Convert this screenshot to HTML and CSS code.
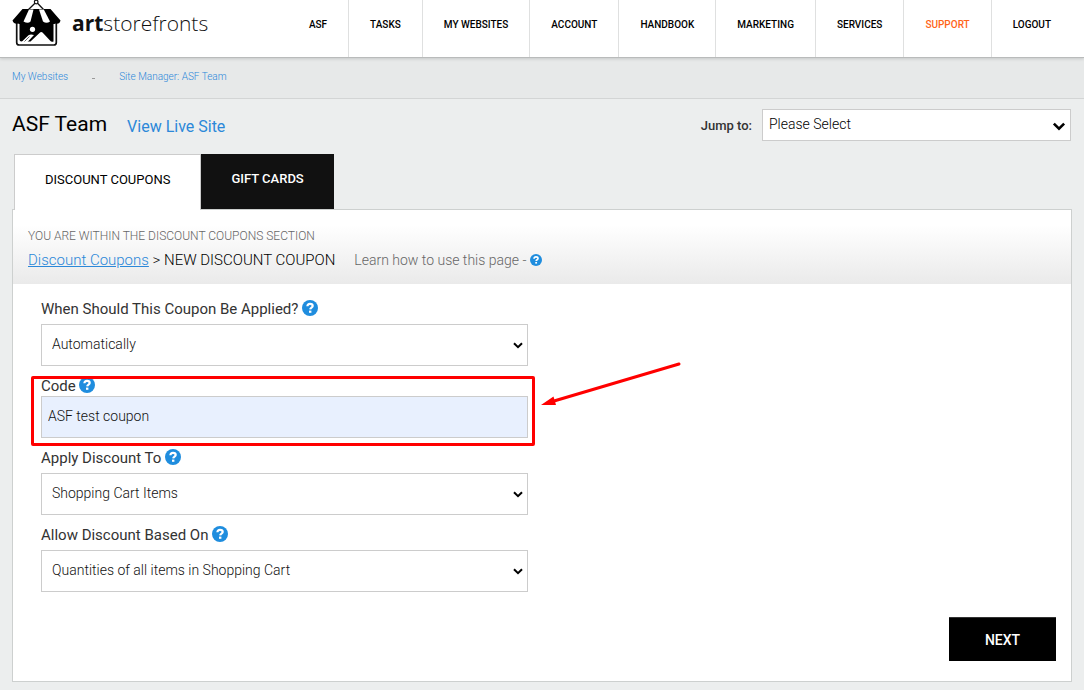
FILE: index.html
```html
<!DOCTYPE html>
<html lang="en">
<head>
<meta charset="utf-8">
<meta name="viewport" content="width=device-width, initial-scale=1">
<title>New Discount Coupon</title>
<link rel="stylesheet" href="styles.css">
</head>
<body>
<svg class="sprite" aria-hidden="true">
  <symbol id="help" viewBox="0 0 16 16">
    <circle cx="8" cy="8" r="8" fill="#1f8dde"/>
    <path d="M5.400 6.300C5.500 4.600 6.500 3.800 8 3.800s2.700.8 2.700 2.200c0 1.700-2.300 1.500-2.500 3.300" fill="none" stroke="#fff" stroke-width="2.200"/>
    <rect x="7" y="10.600" width="2.400" height="2.200" fill="#fff"/>
  </symbol>
  <symbol id="chevron" viewBox="0 0 10 7">
    <path d="M1 1.2l4 4 4-4" fill="none" stroke="currentColor" stroke-width="2"/>
  </symbol>
</svg>
<header class="topbar">
  <a class="logo" href="#">
    <svg class="logo-mark" viewBox="0 0 50 48" aria-hidden="true">
      <path d="M17 10L24.200 3M33 10L26.300 3" stroke="#111" stroke-width="1.300" fill="none"/>
      <circle cx="25.200" cy="2" r="1.800" fill="none" stroke="#111" stroke-width="1.200"/>
      <path d="M5.700 22V42.500Q5.700 45 8.200 45H42.800Q45.300 45 45.300 42.500V22" fill="#fff" stroke="#111" stroke-width="1.700"/>
      <path d="M8.500 20H42.500V41.500Q40.500 42.500 39 40.500L31.500 32.500Q30 31.500 28.500 33L19.500 41.500H10.500Q8.500 41.500 8.500 39.500Z" fill="#000"/>
      <circle cx="21.500" cy="29.300" r="2.600" fill="#fff"/>
      <path d="M10.500 42L17.500 35.300Q19.500 33.800 23 35L16.500 42Z" fill="#fff"/>
      <path d="M13.500 41.500L18.500 36.500" stroke="#000" stroke-width=".6"/>
      <path d="M11.500 9H39.500L49.500 20.500Q48.500 24.500 44.500 23.500Q42.500 24.500 39 23.500Q36 25 33 23Q29.500 25 26 23Q21.500 25 18.500 23Q15.500 25 12.500 23.500Q9 24.500 7 23.500Q3 24.500 1.500 20.500Z" fill="#000"/>
      <path d="M18 9.500H22.500L19.500 21.500Q17 24 12.500 21.500Z" fill="#fff"/>
      <path d="M28 9.500H32.800L39 21.500Q35.500 24 32 21.500Z" fill="#fff"/>
    </svg>
    <span class="logo-text"><b>art</b>storefronts</span>
  </a>
  <nav class="nav">
    <a href="#">ASF</a><a href="#">TASKS</a><a href="#">MY WEBSITES</a><a href="#">ACCOUNT</a><a href="#">HANDBOOK</a><a href="#">MARKETING</a><a href="#">SERVICES</a><a class="nav-support" href="#">SUPPORT</a><a href="#">LOGOUT</a>
  </nav>
</header>
<div class="crumbs">
  <a href="#">My Websites</a><span class="crumb-dot"></span><a href="#">Site Manager: ASF Team</a>
</div>
<main class="page">
  <div class="title-row">
    <h1>ASF Team</h1>
    <a class="live" href="#">View Live Site</a>
    <label class="jump-label" for="jump">Jump to:</label>
    <div class="select jump">
      <select id="jump"><option>Please Select</option></select>
      <svg><use href="#chevron"/></svg>
    </div>
  </div>
  <div class="tabs">
    <button class="tab tab-active" type="button">DISCOUNT COUPONS</button>
    <button class="tab" type="button">GIFT CARDS</button>
  </div>
  <section class="panel">
    <div class="panel-head">
      <p class="section-note">YOU ARE WITHIN THE DISCOUNT COUPONS SECTION</p>
      <p class="trail"><span class="where"><a href="#">Discount Coupons</a> &gt; NEW DISCOUNT COUPON</span><a class="learn" href="#">Learn how to use this page - <svg class="help-small"><use href="#help"/></svg></a></p>
    </div>
    <form class="form">
      <div class="field">
        <label for="when">When Should This Coupon Be Applied? <svg class="help"><use href="#help"/></svg></label>
        <div class="select"><select id="when"><option>Automatically</option></select><svg><use href="#chevron"/></svg></div>
      </div>
      <div class="field field-code">
        <label for="code">Code <svg class="help"><use href="#help"/></svg></label>
        <input id="code" type="text" value="ASF test coupon">
        <div class="highlight"></div>
        <svg class="arrow" viewBox="0 0 140 46" aria-hidden="true"><path d="M13 39L138 2" stroke="#f00" stroke-width="3" stroke-linecap="round"/><path d="M0 43L12.500 34.500L15 43Z" fill="#f00"/></svg>
      </div>
      <div class="field">
        <label for="apply">Apply Discount To <svg class="help"><use href="#help"/></svg></label>
        <div class="select"><select id="apply"><option>Shopping Cart Items</option></select><svg><use href="#chevron"/></svg></div>
      </div>
      <div class="field">
        <label for="based">Allow Discount Based On <svg class="help"><use href="#help"/></svg></label>
        <div class="select"><select id="based"><option>Quantities of all items in Shopping Cart</option></select><svg><use href="#chevron"/></svg></div>
      </div>
      <button class="next" type="submit">NEXT</button>
    </form>
  </section>
</main>
</body>
</html>
```
FILE: styles.css
```css
* { box-sizing: border-box; }
body {
  margin: 0;
  background: #eceeee;
  color: #000;
  font-family: Roboto, "Liberation Sans", sans-serif;
}
a { color: #2b88d9; text-decoration: none; }
h1, p { margin: 0; font-weight: 400; }
button, input, select { font-family: inherit; border-radius: 0; }
.sprite { display: none; }

.topbar {
  position: relative;
  display: flex;
  justify-content: space-between;
  height: 58px;
  padding: 0 12px 0 11px;
  background: #fff;
  border-bottom: 1px solid #b9bbbb;
  box-shadow: 0 1px 3px rgba(0, 0, 0, .15);
}
.logo { display: flex; align-items: flex-start; color: #111; }
.logo-mark { width: 50px; height: 48px; }
.logo-text {
  padding-left: 11px;
  font: 300 21px/46px "Open Sans", sans-serif;
}
.logo-text b { font-weight: 700; }
.nav { display: flex; }
.nav a {
  padding: 0 21px;
  border-right: 1px solid #dfe0e0;
  color: #000;
  font-size: 10px;
  font-weight: 500;
  line-height: 50px;
}
.nav a:last-child { border-right: 0; }
.nav .nav-support { color: #ff6418; }

.crumbs {
  display: flex;
  align-items: center;
  height: 41px;
  padding: 0 12px 3px;
  background: #e7e9e9;
  border-bottom: 1px solid #d3d5d5;
  font-size: 10px;
  font-weight: 300;
}
.crumb-dot { width: 3px; height: 1px; margin: 4px 24px 0; background: #999; }

.page { padding: 10px 12px 8px; }
.title-row { display: flex; align-items: center; height: 32px; }
h1 { margin-bottom: 2px; font-size: 21px; }
.live { margin: 3px auto 0 20px; font-size: 16px; }
.jump-label { margin-right: 10px; color: #333; font-size: 13px; font-weight: 500; }

.select { position: relative; }
.select svg {
  position: absolute;
  right: 5px;
  top: 18px;
  width: 10px;
  height: 7px;
  pointer-events: none;
}
.select select, .field input {
  display: block;
  width: 100%;
  height: 42px;
  padding: 0 10px 2px;
  appearance: none;
  background: #fff;
  border: 1px solid #ccc;
  color: #111;
  font-size: 14px;
  font-weight: 300;
}
.select.jump { width: 309px; margin-right: 1px; }
.jump select { height: 32px; padding: 0 6px 2px; color: #000; }
.jump svg { right: 5px; top: 13px; width: 14px; height: 9px; }

.tabs { display: flex; margin: 13px 0 0 2px; }
.tab {
  height: 55px;
  padding: 0 30px 6px;
  background: #111;
  border: 0;
  color: #fff;
  font-size: 13px;
  font-weight: 500;
}
.tab-active {
  position: relative;
  height: 56px;
  margin-bottom: -1px;
  padding-bottom: 6px;
  background: #fff;
  border: 1px solid #ccc;
  border-bottom: 0;
  color: #000;
  font-weight: 400;
}

.panel { background: #fff; border: 1px solid #cdd0cf; }
.panel-head {
  padding: 16px 15px 14px;
  background: linear-gradient(#fff 20%, #eaeaea);
}
.section-note { color: #666; font-size: 12px; font-weight: 300; line-height: 20px; }
.trail { display: flex; padding-top: 4px; font-size: 15px; font-weight: 300; line-height: 20px; }
.trail a { font-size: 15px; }
.where a { text-decoration: underline; }
.trail .learn { margin-left: 19px; color: #666; font-size: 14px; }
.help-small { width: 12px; height: 12px; vertical-align: -1px; }

.form { display: flex; flex-direction: column; gap: 10px; padding: 15px 15px 20px 28px; }
.field { width: 100%; max-width: 487px; }
.field label {
  display: block;
  margin-bottom: 5px;
  color: #333;
  font-size: 15px;
  line-height: 20px;
}
.help { width: 16px; height: 16px; vertical-align: -2px; }
.field-code { position: relative; }
.field-code label { margin-bottom: 0; }
.field-code input { padding: 0 6px 2px; background: #e8f0fe; }
.highlight {
  position: absolute;
  inset: 0 -7px -8px -10px;
  border: 3px solid #f00;
  border-radius: 2px;
  pointer-events: none;
}
.arrow { position: absolute; left: 500px; top: -14px; width: 140px; height: 46px; }
.next {
  align-self: flex-end;
  width: 107px;
  height: 44px;
  margin-top: 15px;
  background: #000;
  border: 0;
  border-top: 1px solid #333;
  color: #fff;
  font-size: 14px;
  font-weight: 500;
}
```
